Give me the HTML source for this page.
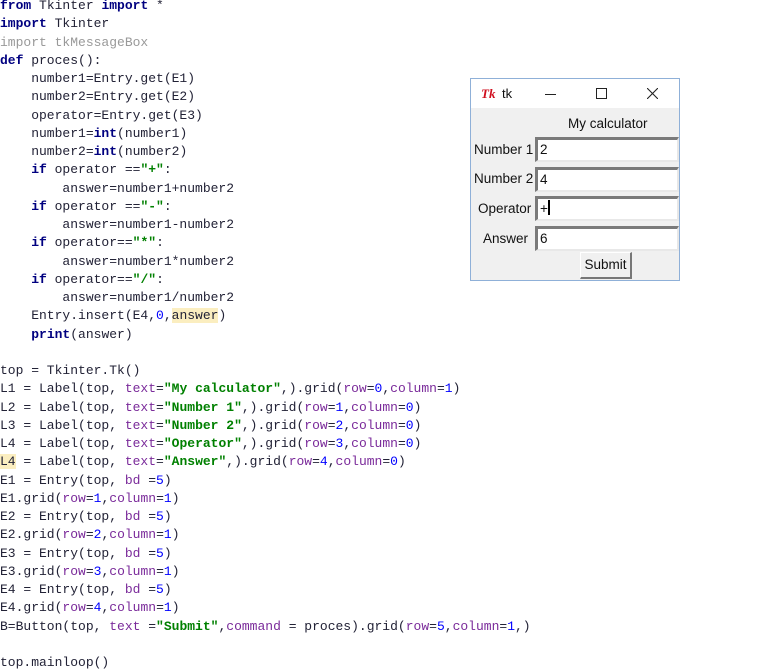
<!DOCTYPE html>
<html><head><meta charset="utf-8"><style>
body{margin:0;width:768px;height:665px;background:#fff;overflow:hidden;position:relative}
pre{margin:0;position:absolute;left:0;top:-3px;font-family:"Liberation Mono",monospace;font-size:13px;line-height:18.25px;color:#222236;font-weight:normal;letter-spacing:0}
.k{color:#000080;font-weight:bold}.g{color:#999}.s{color:#008000;font-weight:bold}.p{color:#7a2a9a}.n{color:#0000ff}.h{background:#fbeec0}
.win{position:absolute;left:470px;top:78px;width:208px;height:201px;border:1px solid #8fb0d8;background:#f0f0f0;font-family:"Liberation Sans",sans-serif;font-size:13.5px;color:#111}
.tb{position:absolute;left:0;top:0;width:208px;height:29px;background:#fff}
.lab{position:absolute;white-space:nowrap}
.en{position:absolute;left:64px;width:137px;height:20px;background:#fff;border-top:3px solid #7a7a7a;border-left:3px solid #7a7a7a;border-right:2px solid #e8e8e8;border-bottom:2px solid #e8e8e8;font-size:13.5px;line-height:20px;padding-left:2px}
.btn{position:absolute;left:109px;top:173px;width:52px;height:27px;background:#f0f0f0;border:1px solid #fff;border-right:2px solid #777;border-bottom:2px solid #777;box-sizing:border-box;text-align:center;line-height:24px}
</style></head><body>
<pre><span class="k">from</span> Tkinter <span class="k">import</span> *
<span class="k">import</span> Tkinter
<span class="g">import tkMessageBox</span>
<span class="k">def</span> proces():
    number1=Entry.get(E1)
    number2=Entry.get(E2)
    operator=Entry.get(E3)
    number1=<span class="k">int</span>(number1)
    number2=<span class="k">int</span>(number2)
    <span class="k">if</span> operator ==<span class="s">"+"</span>:
        answer=number1+number2
    <span class="k">if</span> operator ==<span class="s">"-"</span>:
        answer=number1-number2
    <span class="k">if</span> operator==<span class="s">"*"</span>:
        answer=number1*number2
    <span class="k">if</span> operator==<span class="s">"/"</span>:
        answer=number1/number2
    Entry.insert(E4,<span class="n">0</span>,<span class="h">answer</span>)
    <span class="k">print</span>(answer)

top = Tkinter.Tk()
L1 = Label(top, <span class="p">text</span>=<span class="s">"My calculator"</span>,).grid(<span class="p">row</span>=<span class="n">0</span>,<span class="p">column</span>=<span class="n">1</span>)
L2 = Label(top, <span class="p">text</span>=<span class="s">"Number 1"</span>,).grid(<span class="p">row</span>=<span class="n">1</span>,<span class="p">column</span>=<span class="n">0</span>)
L3 = Label(top, <span class="p">text</span>=<span class="s">"Number 2"</span>,).grid(<span class="p">row</span>=<span class="n">2</span>,<span class="p">column</span>=<span class="n">0</span>)
L4 = Label(top, <span class="p">text</span>=<span class="s">"Operator"</span>,).grid(<span class="p">row</span>=<span class="n">3</span>,<span class="p">column</span>=<span class="n">0</span>)
<span class="h">L4</span> = Label(top, <span class="p">text</span>=<span class="s">"Answer"</span>,).grid(<span class="p">row</span>=<span class="n">4</span>,<span class="p">column</span>=<span class="n">0</span>)
E1 = Entry(top, <span class="p">bd</span> =<span class="n">5</span>)
E1.grid(<span class="p">row</span>=<span class="n">1</span>,<span class="p">column</span>=<span class="n">1</span>)
E2 = Entry(top, <span class="p">bd</span> =<span class="n">5</span>)
E2.grid(<span class="p">row</span>=<span class="n">2</span>,<span class="p">column</span>=<span class="n">1</span>)
E3 = Entry(top, <span class="p">bd</span> =<span class="n">5</span>)
E3.grid(<span class="p">row</span>=<span class="n">3</span>,<span class="p">column</span>=<span class="n">1</span>)
E4 = Entry(top, <span class="p">bd</span> =<span class="n">5</span>)
E4.grid(<span class="p">row</span>=<span class="n">4</span>,<span class="p">column</span>=<span class="n">1</span>)
B=Button(top, <span class="p">text</span> =<span class="s">"Submit"</span>,<span class="p">command</span> = proces).grid(<span class="p">row</span>=<span class="n">5</span>,<span class="p">column</span>=<span class="n">1</span>,)

top.mainloop()</pre>
<div class="win">
<div class="tb">
<span class="lab" style="left:10px;top:7px;color:#d01020;font-style:italic;font-weight:bold;font-size:13px;font-family:'Liberation Serif',serif">Tk</span>
<span class="lab" style="left:31px;top:7px;font-size:13px">tk</span>
<div style="position:absolute;left:74px;top:15px;width:11px;height:1px;background:#222"></div>
<div style="position:absolute;left:125px;top:9px;width:9px;height:9px;border:1px solid #222"></div>
<svg style="position:absolute;left:176px;top:9px" width="11" height="11"><path d="M0 0L11 11M11 0L0 11" stroke="#222" stroke-width="1.1"/></svg>
</div>
<span class="lab" style="left:97px;top:37px">My calculator</span>
<span class="lab" style="left:3px;top:63px">Number 1</span>
<span class="lab" style="left:3px;top:92px">Number 2</span>
<span class="lab" style="left:7px;top:122px">Operator</span>
<span class="lab" style="left:12px;top:152px">Answer</span>
<div class="en" style="top:58px">2</div>
<div class="en" style="top:88px">4</div>
<div class="en" style="top:117px">+<span style="display:inline-block;width:2px;height:15px;background:#000;vertical-align:-2px"></span></div>
<div class="en" style="top:147px">6</div>
<div class="btn">Submit</div>
</div>
</body></html>
